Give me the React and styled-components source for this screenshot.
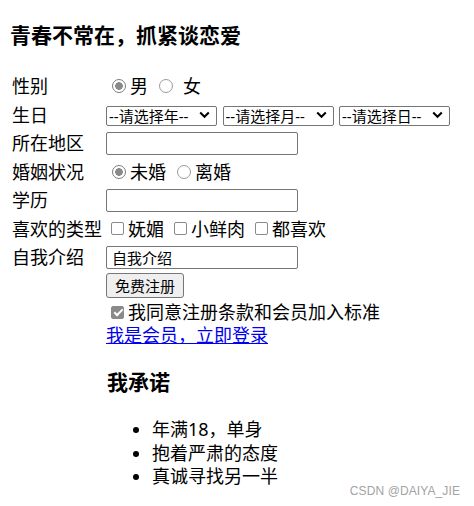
import styled, { createGlobalStyle } from 'styled-components';

const GlobalStyle = createGlobalStyle`
  html, body {
    margin: 0;
    padding: 0;
    background: #fff;
  }
  body {
    font-family: "Noto Sans", "Noto Sans CJK SC", sans-serif;
    color: #000;
  }
`;

const Page = styled.div`
  position: relative;
  width: 474px;
  height: 506px;
  padding: 0 0 0 9px;
  box-sizing: border-box;
  overflow: hidden;
`;

const Title = styled.h3`
  margin: 21px 0 0 1px;
  font-size: 21px;
  line-height: 28px;
  font-weight: 700;
`;

const Form = styled.form`
  margin: 23px 0 0 3px;
`;

const Row = styled.div`
  display: grid;
  grid-template-columns: 94px 1fr;
  align-items: center;
  height: ${({ $h }) => $h || 28.5}px;
`;

const Label = styled.span`
  font-size: 18px;
  line-height: 24px;
  white-space: nowrap;
`;

const Field = styled.div`
  display: flex;
  align-items: center;
  gap: ${({ $gap }) => $gap ?? 0}px;
  grid-column: 2;
`;

const Choice = styled.label`
  display: inline-flex;
  align-items: center;
  font-size: 18px;
  line-height: 24px;
  margin-right: 5px;
`;

const ChoiceText = styled.span`
  padding-left: ${({ $pad }) => $pad || 0}px;
`;

const Radio = styled.input.attrs({ type: 'radio' })`
  appearance: none;
  box-sizing: border-box;
  width: 14px;
  height: 14px;
  margin: 0 4px 0 6px;
  border: 1px solid #9a9a9a;
  border-radius: 50%;
  background: #fff;

  &:checked {
    border-color: #7d7d7d;
    background: radial-gradient(circle, #8a8a8a 0 3.6px, #fff 4px);
  }
`;

const Check = styled.input.attrs({ type: 'checkbox' })`
  appearance: none;
  box-sizing: border-box;
  width: 13px;
  height: 13px;
  margin: 0 4px 0 5px;
  border: 1px solid #8a8a8a;
  border-radius: 2px;
  background: #fff;
  position: relative;

  &:checked {
    background: #8a8a8a;
    border-color: #8a8a8a;
  }

  &:checked::after {
    content: '';
    position: absolute;
    left: 3.5px;
    top: 0.5px;
    width: 3px;
    height: 7px;
    border: solid #fff;
    border-width: 0 2px 2px 0;
    transform: rotate(45deg);
  }
`;

const TextInput = styled.input`
  box-sizing: border-box;
  width: 192px;
  height: 23px;
  padding: 1px 5px;
  border: 1px solid #767676;
  border-radius: 2px;
  font: 15px "Noto Sans", "Noto Sans CJK SC", sans-serif;
  color: #000;
  background: #fff;
`;

const SelectBox = styled.div`
  position: relative;
  width: 111px;
  height: 20px;

  svg {
    position: absolute;
    right: 7px;
    top: 6px;
    pointer-events: none;
  }
`;

const Select = styled.select`
  appearance: none;
  box-sizing: border-box;
  width: 100%;
  height: 100%;
  padding: 0 20px 0 2px;
  border: 1px solid #767676;
  border-radius: 2px;
  background: #fff;
  color: #000;
  font: 15px/18px "Noto Sans", "Noto Sans CJK SC", sans-serif;
`;

const Button = styled.button`
  box-sizing: border-box;
  width: 78px;
  height: 25px;
  padding: 0;
  border: 1px solid #767676;
  border-radius: 3px;
  background: #efefef;
  color: #000;
  font: 15px/20px "Noto Sans", "Noto Sans CJK SC", sans-serif;
`;

const Link = styled.a`
  font-size: 18px;
  line-height: 22px;
  color: #0000ee;
  text-decoration: underline;
`;

const Promise = styled.div`
  margin-left: 98px;
`;

const SubTitle = styled.h3`
  margin: 22px 0 0;
  font-size: 21px;
  line-height: 28px;
  font-weight: 700;
`;

const List = styled.ul`
  margin: 22px 0 0;
  padding-left: 45px;
  font-size: 18px;
  line-height: 23.5px;
`;

const Watermark = styled.div`
  position: absolute;
  right: 14px;
  top: 482px;
  font: 12px/18px "Liberation Sans", Arial, sans-serif;
  color: #a3a3a3;
  letter-spacing: 0.1px;
`;

const Chevron = () => (
  <svg width="11" height="8" viewBox="0 0 11 8">
    <path d="M1.2 1.5 L5.5 5.8 L9.8 1.5" fill="none" stroke="#000" strokeWidth="2" />
  </svg>
);

const DateSelect = ({ text }) => (
  <SelectBox>
    <Select defaultValue="">
      <option value="">{text}</option>
    </Select>
    <Chevron />
  </SelectBox>
);

const App = () => {
  return (
    <>
      <GlobalStyle />
      <Page>
        <Title>青春不常在，抓紧谈恋爱</Title>
        <Form onSubmit={(e) => e.preventDefault()}>
          <Row>
            <Label>性别</Label>
            <Field>
              <Choice>
                <Radio name="sex" defaultChecked />
                <ChoiceText>男</ChoiceText>
              </Choice>
              <Choice>
                <Radio name="sex" />
                <ChoiceText $pad={6}>女</ChoiceText>
              </Choice>
            </Field>
          </Row>
          <Row>
            <Label>生日</Label>
            <Field $gap={5.5}>
              <DateSelect text="--请选择年--" />
              <DateSelect text="--请选择月--" />
              <DateSelect text="--请选择日--" />
            </Field>
          </Row>
          <Row>
            <Label>所在地区</Label>
            <Field>
              <TextInput type="text" />
            </Field>
          </Row>
          <Row>
            <Label>婚姻状况</Label>
            <Field>
              <Choice>
                <Radio name="marry" defaultChecked />
                <ChoiceText>未婚</ChoiceText>
              </Choice>
              <Choice>
                <Radio name="marry" />
                <ChoiceText>离婚</ChoiceText>
              </Choice>
            </Field>
          </Row>
          <Row>
            <Label>学历</Label>
            <Field>
              <TextInput type="text" />
            </Field>
          </Row>
          <Row>
            <Label>喜欢的类型</Label>
            <Field>
              <Choice>
                <Check />
                <ChoiceText>妩媚</ChoiceText>
              </Choice>
              <Choice>
                <Check />
                <ChoiceText>小鲜肉</ChoiceText>
              </Choice>
              <Choice>
                <Check />
                <ChoiceText>都喜欢</ChoiceText>
              </Choice>
            </Field>
          </Row>
          <Row>
            <Label>自我介绍</Label>
            <Field>
              <TextInput type="text" defaultValue="自我介绍" />
            </Field>
          </Row>
          <Row>
            <Field>
              <Button type="submit">免费注册</Button>
            </Field>
          </Row>
          <Row $h={24}>
            <Field>
              <Choice>
                <Check defaultChecked />
                <ChoiceText>我同意注册条款和会员加入标准</ChoiceText>
              </Choice>
            </Field>
          </Row>
          <Row $h={22}>
            <Field>
              <Link href="#">我是会员，立即登录</Link>
            </Field>
          </Row>
        </Form>
        <Promise>
          <SubTitle>我承诺</SubTitle>
          <List>
            <li>年满18，单身</li>
            <li>抱着严肃的态度</li>
            <li>真诚寻找另一半</li>
          </List>
        </Promise>
        <Watermark>CSDN @DAIYA_JIE</Watermark>
      </Page>
    </>
  );
};

export default App;
